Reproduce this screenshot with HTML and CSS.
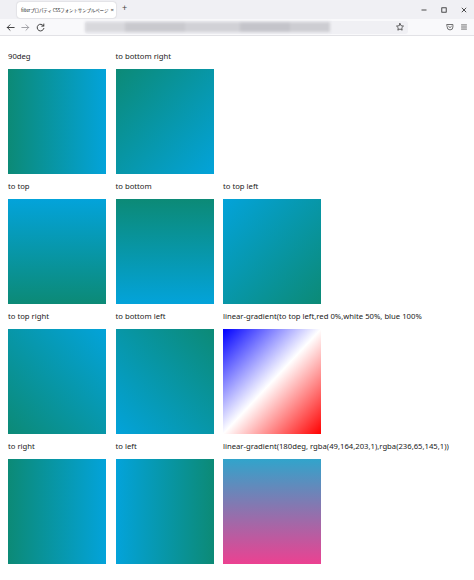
FILE: index.html
```html
<!DOCTYPE html>
<html lang="ja">
<head>
<meta charset="utf-8">
<title>filterプロパティ CSSフォントサンプルページ</title>
<link rel="stylesheet" href="styles.css">
</head>
<body>
<div class="browser">
  <div class="tabbar">
    <div class="tab">
      <span class="tab-title">filterプロパティ CSSフォントサンプルページ</span>
      <span class="tab-close">×</span>
    </div>
    <span class="newtab">+</span>
    <div class="winctl">
      <svg class="wc" viewBox="0 0 10 10"><path d="M2.5 5h5" /></svg>
      <svg class="wc" viewBox="0 0 10 10"><rect x="2.8" y="2.8" width="4.4" height="4.4" /></svg>
      <svg class="wc" viewBox="0 0 10 10"><path d="M2.8 2.8l4.4 4.4M7.2 2.8l-4.4 4.4" /></svg>
    </div>
  </div>
  <div class="toolbar">
    <div class="nav">
      <svg class="ico" viewBox="0 0 12 12"><path d="M10 6H2.5M5.5 3L2.5 6l3 3" /></svg>
      <svg class="ico dim" viewBox="0 0 12 12"><path d="M2 6h7.5M6.5 3l3 3-3 3" /></svg>
      <svg class="ico" viewBox="0 0 12 12"><path d="M9.3 4.2A3.7 3.7 0 1 0 9.7 7" /><path d="M9.6 2.2v2.3H7.3" /></svg>
    </div>
    <div class="urlbar">
      <div class="blurred">
        <span class="bl b1"></span><span class="bl b2"></span><span class="bl b3"></span><span class="bl b4"></span><span class="bl b5"></span>
      </div>
      <svg class="ico star" viewBox="0 0 12 12"><path d="M6 1.8l1.3 2.7 2.9.4-2.1 2 .5 2.9L6 8.4 3.4 9.8l.5-2.9-2.1-2 2.9-.4z" /></svg>
    </div>
    <div class="tools">
      <svg class="ico" viewBox="0 0 12 12"><path d="M2.5 3h7v3a3.5 3.5 0 0 1-7 0z" /><path d="M4.3 5.2L6 6.8l1.7-1.6" /></svg>
      <svg class="ico" viewBox="0 0 12 12"><path d="M3 3.5h6M3 6h6M3 8.5h6" /></svg>
    </div>
  </div>
</div>
<main class="content">
  <div class="grid">
    <div class="item"><p class="label">90deg</p><div class="box g-90"></div></div>
    <div class="item"><p class="label">to bottom right</p><div class="box g-br"></div></div>
    <div class="item empty"></div>

    <div class="item"><p class="label">to top</p><div class="box g-t"></div></div>
    <div class="item"><p class="label">to bottom</p><div class="box g-b"></div></div>
    <div class="item"><p class="label">to top left</p><div class="box g-tl"></div></div>

    <div class="item"><p class="label">to top right</p><div class="box g-tr"></div></div>
    <div class="item"><p class="label">to bottom left</p><div class="box g-bl"></div></div>
    <div class="item"><p class="label">linear-gradient(to top left,red 0%,white 50%, blue 100%</p><div class="box g-rwb"></div></div>

    <div class="item"><p class="label">to right</p><div class="box g-r"></div></div>
    <div class="item"><p class="label">to left</p><div class="box g-l"></div></div>
    <div class="item"><p class="label">linear-gradient(180deg, rgba(49,164,203,1),rgba(236,65,145,1))</p><div class="box g-pink"></div></div>
  </div>
</main>
</body>
</html>
```

FILE: styles.css
```css
* { box-sizing: border-box; }
html, body { margin: 0; padding: 0; background: #fff; }
body { width: 474px; height: 580px; overflow: hidden; font-family: "Noto Sans", "Noto Sans CJK JP", sans-serif; color: #1f1f1f; }

/* ---------- browser chrome ---------- */
.browser { background: #f0f0f4; border-bottom: 1px solid #e2e2e6; }
.tabbar { height: 19px; display: flex; align-items: flex-end; padding-left: 17px; position: relative; }
.tab {
  width: 99px; height: 16px; margin-bottom: 1px; background: #fff; border-radius: 3px;
  box-shadow: 0 0 1.5px rgba(0,0,0,.25);
  display: flex; align-items: center; padding: 0 2px 0 4px; gap: 1px;
}
.tab-title { flex: 1; font-family: "Noto Sans CJK JP", sans-serif; font-size: 4.5px; color: #222; white-space: nowrap; letter-spacing: -0.12px; }
.tab-close { font-size: 6px; color: #333; line-height: 1; }
.newtab { margin-left: 6px; margin-bottom: 3px; font-size: 9px; color: #444; line-height: 12px; align-self: center; }
.winctl { margin-left: auto; display: flex; align-self: flex-start; height: 19px; align-items: center; padding-right: 5px; gap: 10px; }
.wc { width: 10px; height: 10px; fill: none; stroke: #222; stroke-width: .8; }

.toolbar { height: 16px; background: #f9f9fb; display: flex; align-items: center; padding: 0 4px; }
.nav { display: flex; gap: 4px; width: 81px; padding-left: 1px; }
.ico { width: 11px; height: 11px; fill: none; stroke: #333; stroke-width: 1; stroke-linecap: round; stroke-linejoin: round; }
.ico.dim { stroke: #9a9aa0; }
.urlbar {
  width: 323px; height: 13px; background: #f0f0f4; border-radius: 3px;
  display: flex; align-items: center; justify-content: space-between; padding-right: 3px;
}
.blurred { display: flex; height: 13px; width: 245px; filter: blur(1.4px); align-items: center; }
.bl { display: block; height: 10px; background: #cfcfd4; }
.b1 { width: 40px; background: #d8d8dc; }
.b2 { width: 60px; background: #c9c9ce; }
.b3 { width: 55px; background: #d1d1d6; }
.b4 { width: 50px; background: #c4c4ca; }
.b5 { width: 40px; background: #cdcdd2; }
.star { width: 10px; height: 10px; stroke-width: .9; }
.tools { margin-left: auto; display: flex; gap: 4px; padding-right: 1px; }
.tools .ico { width: 10px; height: 10px; stroke: #555; }

/* ---------- content ---------- */
.content { padding: 14px 8px 0; }
.grid { display: grid; grid-template-columns: repeat(3, 98px); column-gap: 9.5px; row-gap: 6px; }
.item { min-width: 0; }
.label { margin: 0 0 7px; font-size: 7.7px; line-height: 12px; height: 12px; white-space: nowrap; color: #1a1a1a; }
.empty { height: 124px; }
.box { width: 98px; height: 105px; }

.g-90  { background: linear-gradient(90deg, #0c8a76, #03a3da); }
.g-br  { background: linear-gradient(to bottom right, #0c8a76, #03a3da); }
.g-t   { background: linear-gradient(to top, #0c8a76, #03a3da); }
.g-b   { background: linear-gradient(to bottom, #0c8a76, #03a3da); }
.g-tl  { background: linear-gradient(to top left, #0c8a76, #03a3da); }
.g-tr  { background: linear-gradient(to top right, #0c8a76, #03a3da); }
.g-bl  { background: linear-gradient(to bottom left, #0c8a76, #03a3da); }
.g-r   { background: linear-gradient(to right, #0c8a76, #03a3da); }
.g-l   { background: linear-gradient(to left, #0c8a76, #03a3da); }
.g-rwb { background: linear-gradient(to top left, red 0%, white 50%, blue 100%); }
.g-pink { background: linear-gradient(180deg, rgba(49,164,203,1), rgba(236,65,145,1)); }
```
